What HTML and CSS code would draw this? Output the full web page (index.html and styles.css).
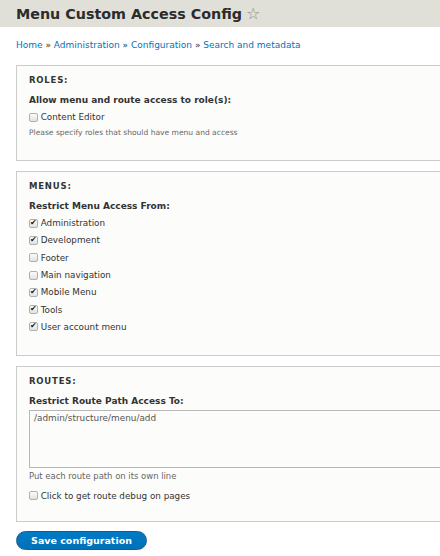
FILE: index.html
```html
<!DOCTYPE html>
<html lang="en">
<head>
<meta charset="utf-8">
<title>Menu Custom Access Config</title>
<link rel="stylesheet" href="styles.css">
</head>
<body>
<header class="page-header">
  <h1 class="page-title">Menu Custom Access Config <span class="star">&#9734;</span></h1>
</header>
<main class="content">
  <nav class="breadcrumb">
    <a href="#">Home</a> <span class="sep">&raquo;</span>
    <a href="#">Administration</a> <span class="sep">&raquo;</span>
    <a href="#">Configuration</a> <span class="sep">&raquo;</span>
    <a href="#">Search and metadata</a>
  </nav>
  <form class="config-form">
    <section class="panel panel-roles">
      <h2 class="panel-title">Roles:</h2>
      <div class="field-label">Allow menu and route access to role(s):</div>
      <div class="options">
        <label class="option"><input type="checkbox" class="check"> Content Editor</label>
      </div>
      <div class="description small">Please specify roles that should have menu and access</div>
    </section>
    <section class="panel panel-menus">
      <h2 class="panel-title">Menus:</h2>
      <div class="field-label">Restrict Menu Access From:</div>
      <div class="options">
        <label class="option"><input type="checkbox" class="check" checked> Administration</label>
        <label class="option"><input type="checkbox" class="check" checked> Development</label>
        <label class="option"><input type="checkbox" class="check"> Footer</label>
        <label class="option"><input type="checkbox" class="check"> Main navigation</label>
        <label class="option"><input type="checkbox" class="check" checked> Mobile Menu</label>
        <label class="option"><input type="checkbox" class="check" checked> Tools</label>
        <label class="option"><input type="checkbox" class="check" checked> User account menu</label>
      </div>
    </section>
    <section class="panel panel-routes">
      <h2 class="panel-title">Routes:</h2>
      <div class="field-label">Restrict Route Path Access To:</div>
      <textarea class="route-input">/admin/structure/menu/add</textarea>
      <div class="description">Put each route path on its own line</div>
      <div class="options options-debug">
        <label class="option"><input type="checkbox" class="check"> Click to get route debug on pages</label>
      </div>
    </section>
    <div class="actions">
      <button type="button" class="button-primary">Save configuration</button>
    </div>
  </form>
</main>
</body>
</html>
```
FILE: styles.css
```css
html, body {
  margin: 0;
  padding: 0;
  overflow: hidden;
  background: #ffffff;
}
body {
  font-family: "DejaVu Sans", "Liberation Sans", sans-serif;
  color: #333333;
  font-size: 9px;
  width: 440px;
  height: 556px;
}
.page-header {
  background: #e0e0d8;
  height: 27px;
  display: flex;
  align-items: center;
  padding-left: 16px;
}
.page-title {
  margin: 0;
  font-size: 14.3px;
  font-weight: bold;
  color: #2b2b2b;
  line-height: 18px;
  display: flex;
  align-items: center;
}
.star {
  font-weight: normal;
  color: #8e8e8a;
  font-size: 16px;
  margin-left: 4px;
}
.content {
  padding: 0 0 0 16px;
}
.breadcrumb {
  padding-top: 12px;
  line-height: 12px;
  height: 12px;
  white-space: nowrap;
}
.breadcrumb a {
  color: #0074bd;
  text-decoration: none;
}
.breadcrumb .sep {
  color: #333;
}
.config-form {
  margin-top: 14px;
  display: flex;
  flex-direction: column;
  gap: 10px;
}
.panel {
  box-sizing: border-box;
  border: 1px solid #cccccc;
  border-right: 0;
  background: #fcfcfa;
  padding: 9px 0 0 12px;
}
.panel-title {
  margin: 0;
  font-size: 8.5px;
  line-height: 11px;
  font-weight: bold;
  text-transform: uppercase;
  letter-spacing: 0.8px;
  color: #333;
}
.field-label {
  margin-top: 8px;
  font-weight: bold;
  font-size: 9px;
  line-height: 12px;
}
.options {
  margin-top: 2.5px;
  display: flex;
  flex-direction: column;
}
.option {
  display: flex;
  align-items: center;
  height: 17.3px;
  white-space: nowrap;
  font-size: 8.8px;
}
.check {
  appearance: none;
  -webkit-appearance: none;
  width: 9px;
  height: 9px;
  box-sizing: border-box;
  margin: 0 2.7px 0 0;
  border: 1px solid #b0b0ac;
  border-radius: 2px;
  background: linear-gradient(#fbfbfb, #e2e2e0);
  position: relative;
  flex: none;
}
.check:checked::after {
  content: "\2714";
  position: absolute;
  left: 0px;
  top: -2px;
  font-size: 7.5px;
  line-height: 10px;
  color: #1a1a1a;
}
.description {
  margin-top: 3px;
  font-size: 8.45px;
  line-height: 10px;
  color: #666666;
}
.description.small {
  margin-top: 2.5px;
  font-size: 7.55px;
}
.panel-roles {
  height: 96px;
}
.panel-menus {
  height: 185px;
}
.panel-routes {
  height: 156px;
}
.route-input {
  display: block;
  margin-top: 3px;
  width: 100%;
  height: 58px;
  box-sizing: border-box;
  border: 1px solid #b8b8b8;
  border-right: 0;
  background: #fcfcfa;
  font-family: "DejaVu Sans", sans-serif;
  font-size: 8.9px;
  line-height: 11px;
  color: #555;
  padding: 2px 4px;
  resize: none;
  border-radius: 0;
}
.options-debug {
  margin-top: 6px;
}
.actions {
  margin-top: -1px;
}
.button-primary {
  width: 131px;
  height: 19px;
  border-radius: 10px;
  border: 1px solid #1e5c90;
  background: linear-gradient(#007bc6, #0071b8);
  color: #ffffff;
  font-family: "DejaVu Sans", sans-serif;
  font-weight: bold;
  font-size: 9.5px;
  padding: 0;
  text-align: center;
  line-height: 17px;
}
```
